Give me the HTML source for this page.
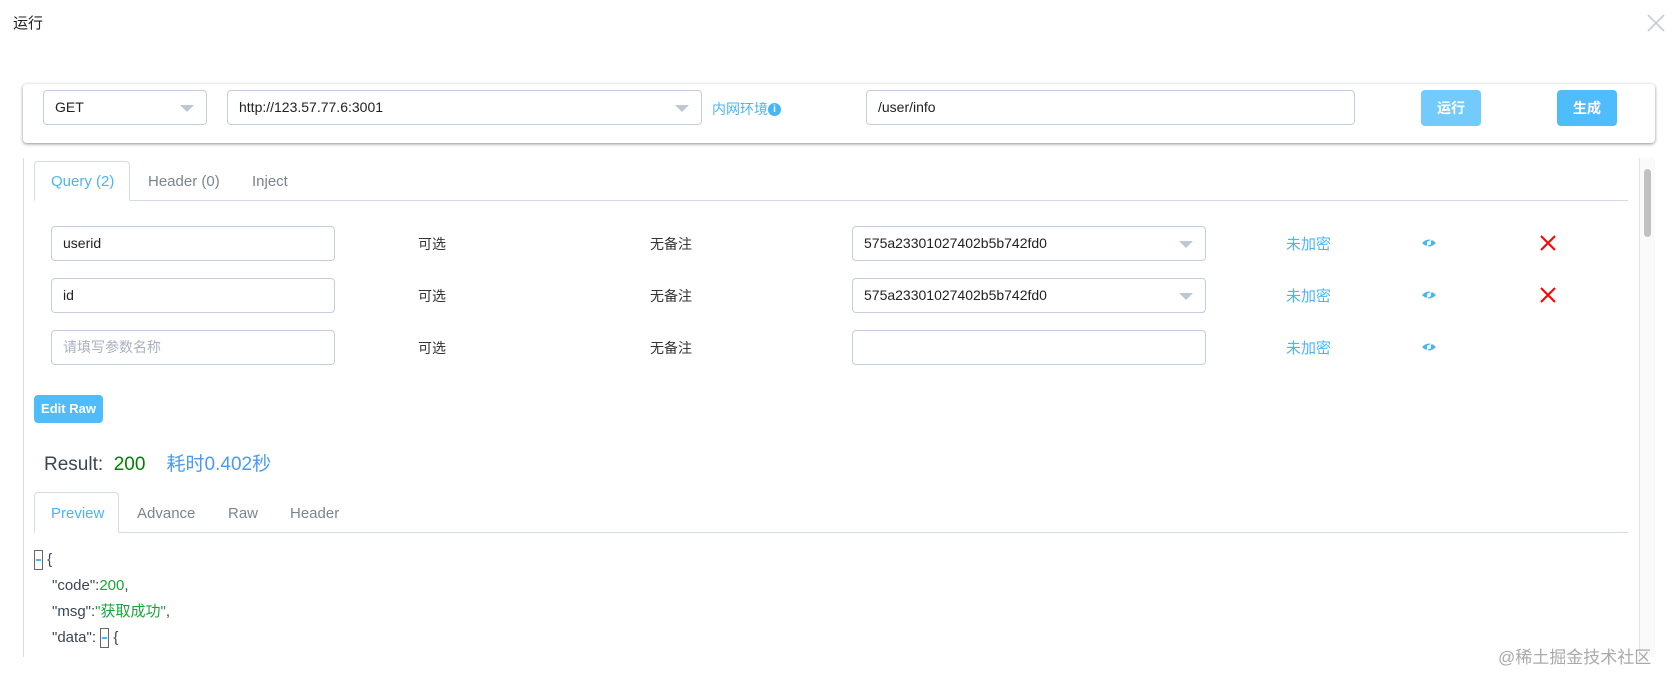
<!DOCTYPE html>
<html><head><meta charset="utf-8"><style>
*{box-sizing:border-box;margin:0;padding:0}
body{width:1680px;height:685px;background:#fff;font-family:"Liberation Sans","Noto Sans CJK SC",sans-serif;font-size:14px;color:#333;position:relative;overflow:hidden}
.a{position:absolute}
.box{position:absolute;border:1px solid #c4cfdb;border-radius:4px;background:#fff;height:35px;line-height:33px;padding-left:11px;font-size:14px;color:#222}
.tri{position:absolute;right:12px;top:14px;width:0;height:0;border-left:7px solid transparent;border-right:7px solid transparent;border-top:7px solid #bfc8d2}
.btn{position:absolute;border-radius:4px;color:#fff;text-align:center;font-weight:bold;font-size:14px}
.blue{color:#48b6f5}
.tab{position:absolute;font-size:15px;color:#7a8490}
.json{position:absolute;left:34px;font-size:15px;color:#3c4555;line-height:26px}
.tg{display:inline-block;width:9px;height:20px;border:1px solid #666;vertical-align:middle;position:relative}
.tg:after{content:"";position:absolute;left:1px;top:8px;width:5px;height:2px;background:#48b6f5}
</style></head><body>
<div class="a" style="left:13px;top:12px;font-size:15px;color:#222">运行</div>
<svg class="a" style="left:1647px;top:14px" width="18" height="18"><path d="M1 1L17 17M17 1L1 17" stroke="#c4ccd6" stroke-width="1.6"/></svg>

<div class="a" style="left:23px;top:84px;width:1632px;height:59px;border-radius:4px;box-shadow:0 1px 3px rgba(0,0,0,.45);background:#fff"></div>
<div class="box" style="left:43px;top:90px;width:164px">GET<div class="tri"></div></div>
<div class="box" style="left:227px;top:90px;width:475px">http://123.57.77.6:3001<div class="tri"></div></div>
<div class="a blue" style="left:712px;top:99px;font-size:14px">内网环境<span style="display:inline-block;width:13px;height:13px;border-radius:50%;background:#48b6f5;color:#fff;font-size:10px;line-height:13px;text-align:center;font-weight:bold;vertical-align:2px">i</span></div>
<div class="box" style="left:866px;top:90px;width:489px">/user/info</div>
<div class="btn" style="left:1421px;top:90px;width:60px;height:36px;line-height:36px;background:#73cbfd">运行</div>
<div class="btn" style="left:1557px;top:90px;width:60px;height:36px;line-height:36px;background:#4fbdfc">生成</div>

<div class="a" style="left:23px;top:158px;width:1px;height:499px;background:#ddd"></div>
<div class="a" style="left:1639px;top:158px;width:16px;height:499px;border-left:1px solid #e3e3e3;background:#fafafa"></div>
<div class="a" style="left:1644px;top:169px;width:7px;height:68px;border-radius:4px;background:#c1c1c1"></div>

<div class="a" style="left:34px;top:200px;width:1594px;height:1px;background:#d3dce6"></div>
<div class="a" style="left:34px;top:161px;width:96px;height:40px;border:1px solid #d3dce6;border-bottom:1px solid #fff;border-radius:4px 4px 0 0;background:#fff"></div>
<div class="tab" style="left:51px;top:173px;color:#48b6f5">Query (2)</div>
<div class="tab" style="left:148px;top:173px">Header (0)</div>
<div class="tab" style="left:252px;top:173px">Inject</div>

<div class="box" style="left:51px;top:226px;width:284px">userid</div>
<div class="a" style="left:418px;top:234px">可选</div><div class="a" style="left:650px;top:234px">无备注</div>
<div class="box" style="left:852px;top:226px;width:354px">575a23301027402b5b742fd0<div class="tri"></div></div>
<div class="a blue" style="left:1286px;top:233px;font-size:15px">未加密</div>
<div class="box" style="left:51px;top:278px;width:284px">id</div>
<div class="a" style="left:418px;top:286px">可选</div><div class="a" style="left:650px;top:286px">无备注</div>
<div class="box" style="left:852px;top:278px;width:354px">575a23301027402b5b742fd0<div class="tri"></div></div>
<div class="a blue" style="left:1286px;top:285px;font-size:15px">未加密</div>
<div class="box" style="left:51px;top:330px;width:284px;color:#aab2bd">请填写参数名称</div>
<div class="a" style="left:418px;top:338px">可选</div><div class="a" style="left:650px;top:338px">无备注</div>
<div class="box" style="left:852px;top:330px;width:354px"></div>
<div class="a blue" style="left:1286px;top:337px;font-size:15px">未加密</div>

<svg class="a" style="left:1421px;top:237px" width="16" height="12"><path d="M1 6Q8-1 15 6Q8 13 1 6Z" fill="#48b6f5"/><circle cx="8" cy="6" r="2" fill="#fff"/><path d="M11 1L5 11" stroke="#fff" stroke-width="1.5"/></svg>
<svg class="a" style="left:1421px;top:289px" width="16" height="12"><path d="M1 6Q8-1 15 6Q8 13 1 6Z" fill="#48b6f5"/><circle cx="8" cy="6" r="2" fill="#fff"/><path d="M11 1L5 11" stroke="#fff" stroke-width="1.5"/></svg>
<svg class="a" style="left:1421px;top:341px" width="16" height="12"><path d="M1 6Q8-1 15 6Q8 13 1 6Z" fill="#48b6f5"/><circle cx="8" cy="6" r="2" fill="#fff"/><path d="M11 1L5 11" stroke="#fff" stroke-width="1.5"/></svg>
<svg class="a" style="left:1540px;top:235px" width="16" height="16"><path d="M1 1L15 15M15 1L1 15" stroke="#f00" stroke-width="2"/></svg>
<svg class="a" style="left:1540px;top:287px" width="16" height="16"><path d="M1 1L15 15M15 1L1 15" stroke="#f00" stroke-width="2"/></svg>

<div class="btn" style="left:34px;top:395px;width:69px;height:28px;line-height:28px;background:#4fbdfc;font-size:13px">Edit Raw</div>

<div class="a" style="left:44px;top:449px;font-size:19px;color:#3c4555">Result:&nbsp; <span style="color:#008000">200</span>&nbsp;&nbsp;&nbsp; <span style="color:#4a9af5">耗时0.402秒</span></div>

<div class="a" style="left:34px;top:532px;width:1594px;height:1px;background:#d3dce6"></div>
<div class="a" style="left:34px;top:492px;width:85px;height:41px;border:1px solid #d3dce6;border-bottom:1px solid #fff;border-radius:4px 4px 0 0;background:#fff"></div>
<div class="tab" style="left:51px;top:505px;color:#48b6f5">Preview</div>
<div class="tab" style="left:137px;top:505px">Advance</div>
<div class="tab" style="left:228px;top:505px">Raw</div>
<div class="tab" style="left:290px;top:505px">Header</div>

<div class="json" style="top:547px"><span class="tg"></span> {</div>
<div class="json" style="top:573px;left:52px">"code":<span style="color:#1aa33b">200</span>,</div>
<div class="json" style="top:599px;left:52px">"msg":<span style="color:#1aa33b">"获取成功"</span>,</div>
<div class="json" style="top:625px;left:52px">"data": <span class="tg"></span> {</div>
<div class="a" style="left:24px;top:657px;width:1615px;height:28px;background:#fff"></div>
<div class="a" style="left:1498px;top:643px;font-size:17px;color:#aaa">@稀土掘金技术社区</div>
</body></html>
